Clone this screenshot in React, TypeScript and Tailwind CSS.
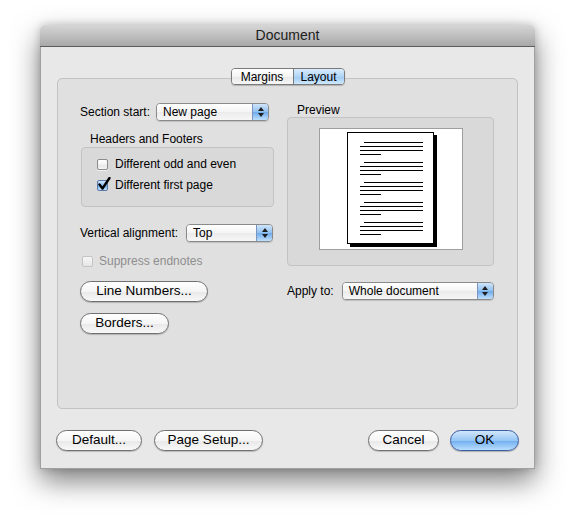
import React from "react";

function Arrows() {
  return (
    <div className="flex flex-col items-center gap-[2px]">
      <svg width="6" height="4" viewBox="0 0 6 4"><path d="M3 0 L6 4 L0 4 Z" fill="#1e1e1e" /></svg>
      <svg width="6" height="4" viewBox="0 0 6 4"><path d="M0 0 L6 0 L3 4 Z" fill="#1e1e1e" /></svg>
    </div>
  );
}

function Popup({ label, w }: { label: string; w: string }) {
  return (
    <div className={`${w} h-[18px] flex rounded-[4px] border border-[#8a8a8a] overflow-hidden shadow-[0_1px_1px_rgba(0,0,0,0.15)]`}>
      <div className="flex-1 flex items-center pl-[6px] bg-[linear-gradient(#ffffff,#f4f4f4_50%,#ebebeb_51%,#f6f6f6)]">{label}</div>
      <div className="w-[16px] border-l border-[#7b95c0] flex items-center justify-center bg-[linear-gradient(#cfe5fa,#8fc0f0_50%,#6eaaea_51%,#bfe0fc)]">
        <Arrows />
      </div>
    </div>
  );
}

function Check({ checked, disabled }: { checked?: boolean; disabled?: boolean }) {
  if (checked) {
    return (
      <div className="relative w-[11px] h-[11px] rounded-[2px] border border-[#5a79aa] bg-[linear-gradient(#d3e7fb,#8dbef0_50%,#72adeb_51%,#c3e1fc)]">
        <svg className="absolute left-[0px] top-[-4px]" width="14" height="14" viewBox="0 0 14 14">
          <path d="M1.5 7.5 L4.5 11.5 L11.5 1" stroke="#000" strokeWidth="2.4" fill="none" strokeLinecap="round" strokeLinejoin="round" />
        </svg>
      </div>
    );
  }
  return (
    <div
      className={
        disabled
          ? "w-[11px] h-[11px] rounded-[2px] border border-[#c4c4c4] bg-[linear-gradient(#f6f6f6,#e6e6e6)]"
          : "w-[11px] h-[11px] rounded-[2px] border border-[#8c8c8c] bg-[linear-gradient(#ffffff,#f2f2f2_50%,#e4e4e4_51%,#f5f5f5)] shadow-[0_1px_0_rgba(255,255,255,0.6)]"
      }
    />
  );
}

function Btn({ label, w, primary }: { label: string; w: string; primary?: boolean }) {
  return (
    <div
      className={
        primary
          ? `${w} h-[21px] rounded-full border border-[#3b5da3] text-[13.5px] flex items-center justify-center bg-[linear-gradient(#d2e7fc,#96c6f5_50%,#6fadef_51%,#b8defd)] shadow-[0_1px_1px_rgba(0,0,0,0.25)]`
          : `${w} h-[21px] rounded-full border border-[#707070] text-[13.5px] flex items-center justify-center bg-[linear-gradient(#ffffff,#f5f5f5_50%,#e8e8e8_51%,#f8f8f8)] shadow-[0_1px_1px_rgba(0,0,0,0.2)]`
      }
    >
      {label}
    </div>
  );
}

function Para() {
  return (
    <div className="flex flex-col gap-[3px]">
      <div className="ml-[4px] w-[59px] h-px bg-black" />
      <div className="w-[63px] h-px bg-black" />
      <div className="w-[63px] h-px bg-black" />
      <div className="w-[21px] h-px bg-black" />
    </div>
  );
}

export default function App() {
  return (
    <div className="w-[574px] h-[524px] bg-white pt-[25px] pl-[40px] font-['Liberation_Sans',Arial,sans-serif] text-[12px] text-black">
      <div className="w-[495px] h-[444px] flex flex-col rounded-t-[5px] shadow-[0_12px_28px_rgba(0,0,0,0.5),0_0_8px_rgba(0,0,0,0.18)]">
        {/* title bar */}
        <div className="h-[22px] shrink-0 rounded-t-[5px] border-b border-[#5c5c5c] bg-[linear-gradient(#d6d6d6,#a8a8a8)] flex items-center justify-center text-[14px] text-[#1c1c1c]">
          Document
        </div>
        {/* body */}
        <div className="flex-1 flex flex-col bg-[#e8e8e8] border-x border-b border-[#a0a0a0] px-[15px] pt-[21px]">
          {/* tabs */}
          <div className="relative z-10 flex justify-center">
            <div className="flex h-[17px] rounded-[4px] border border-[#7a7a7a] overflow-hidden shadow-[0_1px_1px_rgba(0,0,0,0.2)]">
              <div className="w-[61px] flex items-center justify-center bg-[linear-gradient(#ffffff,#f4f4f4_50%,#e8e8e8_51%,#f6f6f6)]">Margins</div>
              <div className="w-[51px] flex items-center justify-center border-l border-[#7a7a7a] bg-[linear-gradient(#d9ecfc,#b1d5f6_50%,#9ccaf3_51%,#cfe8fd)]">Layout</div>
            </div>
          </div>
          {/* tab box */}
          <div className="mt-[-7px] mx-[1px] h-[331px] rounded-[5px] border border-[#c2c2c2] bg-[#e0e0e0] flex pl-[22px] pt-[24px]">
            {/* left column */}
            <div className="w-[195px] flex flex-col">
              <div className="flex items-center h-[18px] gap-[6px]">
                <span>Section start:</span>
                <Popup w="w-[113px]" label="New page" />
              </div>
              <div className="mt-[11px] ml-[10px] leading-[14px]">Headers and Footers</div>
              <div className="mt-[1px] ml-[1px] w-[193px] h-[60px] rounded-[4px] border border-[#c3c3c3] bg-[#d9d9d9] pl-[15px] pt-[9px] flex flex-col gap-[7px]">
                <div className="flex items-center h-[14px] gap-[7px]">
                  <Check />
                  <span>Different odd and even</span>
                </div>
                <div className="flex items-center h-[14px] gap-[7px]">
                  <Check checked />
                  <span>Different first page</span>
                </div>
              </div>
              <div className="mt-[17px] flex items-center h-[18px] gap-[8px]">
                <span>Vertical alignment:</span>
                <Popup w="w-[87px]" label="Top" />
              </div>
              <div className="mt-[12px] ml-[2px] flex items-center h-[14px] gap-[6px] text-[#8e8e8e]">
                <Check disabled />
                <span>Suppress endnotes</span>
              </div>
              <div className="mt-[13px]">
                <Btn w="w-[128px]" label="Line Numbers..." />
              </div>
              <div className="mt-[11px]">
                <Btn w="w-[89px]" label="Borders..." />
              </div>
            </div>
            {/* right column */}
            <div className="ml-[12px] w-[207px] flex flex-col">
              <div className="ml-[10px] leading-[14px]">Preview</div>
              <div className="h-[149px] rounded-[4px] border border-[#c3c3c3] bg-[#d9d9d9] flex justify-center pt-[10px]">
                <div className="w-[144px] h-[122px] bg-white border border-[#9e9e9e] flex justify-center pt-[3px]">
                  <div className="w-[87px] h-[112px] border border-black bg-white shadow-[3px_3px_0_#000] pt-[9px] pl-[12px] flex flex-col gap-[7px]">
                    <Para />
                    <Para />
                    <Para />
                    <Para />
                    <Para />
                  </div>
                </div>
              </div>
              <div className="mt-[16px] flex items-center h-[18px] gap-[8px]">
                <span>Apply to:</span>
                <Popup w="w-[152px]" label="Whole document" />
              </div>
            </div>
          </div>
          {/* bottom buttons */}
          <div className="mt-[21px] flex items-center">
            <Btn w="w-[86px]" label="Default..." />
            <div className="ml-[12px]">
              <Btn w="w-[109px]" label="Page Setup..." />
            </div>
            <div className="ml-auto">
              <Btn w="w-[71px]" label="Cancel" />
            </div>
            <div className="ml-[11px]">
              <Btn w="w-[69px]" label="OK" primary />
            </div>
          </div>
        </div>
      </div>
    </div>
  );
}
